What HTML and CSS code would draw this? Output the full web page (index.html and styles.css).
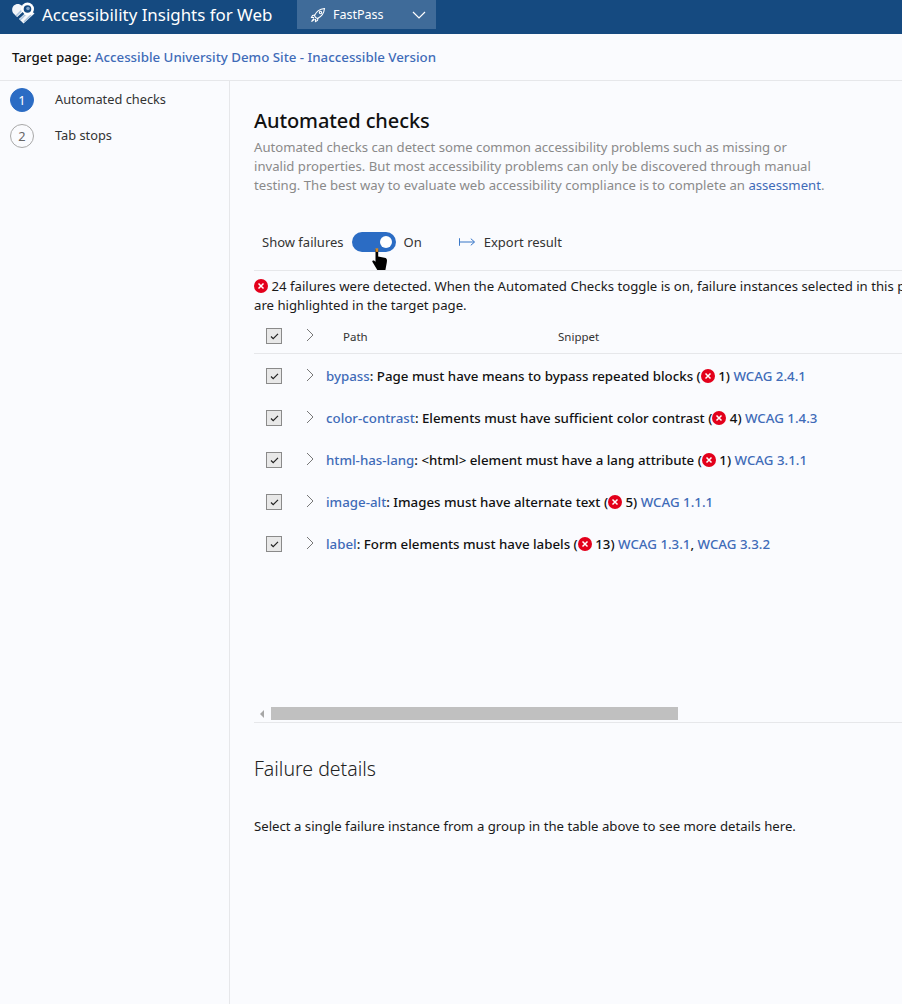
FILE: index.html
```html
<!DOCTYPE html>
<html lang="en">
<head>
<meta charset="utf-8">
<title>Accessibility Insights for Web</title>
<link rel="stylesheet" href="styles.css">
</head>
<body>
<header class="topbar">
  <svg class="logo" viewBox="0 0 24 22" width="24" height="22" aria-hidden="true">
    <path fill="#f2f5f9" d="M11.500 21.500 1.800 11.800C-.4 9.500-.4 5.800 1.800 3.600 4 1.400 7.600 1.400 9.800 3.600L11.500 5.300 13 3.800 22.500 11.500Z"/>
    <path stroke="#a9c3de" stroke-width="1.500" d="M4 14 11 7M8 18 15 11M12 20 19 13"/>
    <circle cx="15.500" cy="7" r="6.500" fill="#fff"/>
    <circle cx="15.500" cy="7" r="3.800" fill="#154a80"/>
    <circle cx="16" cy="6.500" r="1.800" fill="#7fa3c9"/>
    <path d="M11.500 11 5.500 16.500" stroke="#154a80" stroke-width="2.400"/>
  </svg>
  <div class="brand">Accessibility Insights for Web</div>
  <div class="switcher">
    <svg class="rocket" viewBox="0 0 16 16" width="16" height="16" aria-hidden="true" fill="none" stroke="#fff" stroke-width="1.100">
      <path d="M5.500 10.500 4.500 8.500C6.500 4 10 2 14.500 1.500 14 6 12 9.500 7.500 11.500Z"/>
      <path d="M5 8 2.500 8.500 1.500 10.500 4 10.500M8 11 7.500 13.500 5.500 14.500 5.500 12M3.800 11.500 1.500 14.500 4.500 12.300"/>
      <circle cx="10.500" cy="5.500" r="1.200"/>
    </svg>
    <span class="switcher-label">FastPass</span>
    <svg class="switcher-chevron" viewBox="0 0 14 8" width="14" height="8" aria-hidden="true" fill="none" stroke="#fff" stroke-width="1.200"><path d="M1 1 7 7 13 1"/></svg>
  </div>
</header>
<div class="target-bar"><span class="target-label">Target page:</span> <a class="link target-link">Accessible University Demo Site - Inaccessible Version</a></div>
<div class="layout">
  <nav class="sidebar">
    <div class="step"><span class="badge badge-active">1</span><span class="step-label">Automated checks</span></div>
    <div class="step"><span class="badge">2</span><span class="step-label">Tab stops</span></div>
  </nav>
  <main class="content">
    <h1 class="title">Automated checks</h1>
    <p class="intro">Automated checks can detect some common accessibility problems such as missing or invalid properties. But most accessibility problems can only be discovered through manual testing. The best way to evaluate web accessibility compliance is to complete an <a class="link plain">assessment</a>.</p>
    <div class="command-bar">
      <span>Show failures</span>
      <span class="toggle"><span class="knob"></span>
        <svg class="cursor" viewBox="0 0 20 26" width="18" height="24" aria-hidden="true">
          <path fill="#000" d="M5 1.500C5 .5 8 .5 8 1.500V9L15 10.500C18 11 18 13 17.500 16L16 24H7L1.500 15C1 13.500 3 13 4 14L5 15Z"/>
          <rect x="5" y="0" width="3" height="4" fill="#d98a1f"/>
        </svg>
      </span>
      <span class="toggle-state">On</span>
      <span class="export">
        <svg viewBox="0 0 18 10" width="17" height="10" aria-hidden="true" fill="none" stroke="#2b6cc4" stroke-width="1"><path d="M.5 1V9M1 5H16M12.500 1.500 16.500 5 12.500 8.500"/></svg>
        Export result
      </span>
    </div>
    <div class="summary"><svg class="x-icon" viewBox="0 0 14 14" aria-hidden="true"><circle cx="7" cy="7" r="7" fill="#e3001b"/><path d="M4.500 4.500 9.500 9.500M9.500 4.500 4.500 9.500" stroke="#fff" stroke-width="1.500"/></svg> 24 failures were detected. When the Automated Checks toggle is on, failure instances selected in this page are highlighted in the target page.</div>
    <div class="table">
      <div class="row head">
        <span class="check"><svg viewBox="0 0 10 8" width="9" height="7"><path d="M1 4 3.500 6.500 9 1" fill="none" stroke="#222" stroke-width="1.400"/></svg></span>
        <svg class="chev" viewBox="0 0 8 14" width="8" height="14"><path d="M1 1 7 7 1 13" fill="none" stroke="#777" stroke-width="1"/></svg>
        <span class="col-path">Path</span><span>Snippet</span>
      </div>
      <div class="groups">
        <div class="row group">
          <span class="check"><svg viewBox="0 0 10 8" width="9" height="7"><path d="M1 4 3.500 6.500 9 1" fill="none" stroke="#222" stroke-width="1.400"/></svg></span>
          <svg class="chev" viewBox="0 0 8 14" width="8" height="14"><path d="M1 1 7 7 1 13" fill="none" stroke="#777" stroke-width="1"/></svg>
          <span class="rule"><a class="link">bypass</a>: Page must have means to bypass repeated blocks (<svg class="x-icon" viewBox="0 0 14 14"><circle cx="7" cy="7" r="7" fill="#e3001b"/><path d="M4.500 4.500 9.500 9.500M9.500 4.500 4.500 9.500" stroke="#fff" stroke-width="1.500"/></svg> 1) <a class="link">WCAG 2.4.1</a></span>
        </div>
        <div class="row group">
          <span class="check"><svg viewBox="0 0 10 8" width="9" height="7"><path d="M1 4 3.500 6.500 9 1" fill="none" stroke="#222" stroke-width="1.400"/></svg></span>
          <svg class="chev" viewBox="0 0 8 14" width="8" height="14"><path d="M1 1 7 7 1 13" fill="none" stroke="#777" stroke-width="1"/></svg>
          <span class="rule"><a class="link">color-contrast</a>: Elements must have sufficient color contrast (<svg class="x-icon" viewBox="0 0 14 14"><circle cx="7" cy="7" r="7" fill="#e3001b"/><path d="M4.500 4.500 9.500 9.500M9.500 4.500 4.500 9.500" stroke="#fff" stroke-width="1.500"/></svg> 4) <a class="link">WCAG 1.4.3</a></span>
        </div>
        <div class="row group">
          <span class="check"><svg viewBox="0 0 10 8" width="9" height="7"><path d="M1 4 3.500 6.500 9 1" fill="none" stroke="#222" stroke-width="1.400"/></svg></span>
          <svg class="chev" viewBox="0 0 8 14" width="8" height="14"><path d="M1 1 7 7 1 13" fill="none" stroke="#777" stroke-width="1"/></svg>
          <span class="rule"><a class="link">html-has-lang</a>: &lt;html&gt; element must have a lang attribute (<svg class="x-icon" viewBox="0 0 14 14"><circle cx="7" cy="7" r="7" fill="#e3001b"/><path d="M4.500 4.500 9.500 9.500M9.500 4.500 4.500 9.500" stroke="#fff" stroke-width="1.500"/></svg> 1) <a class="link">WCAG 3.1.1</a></span>
        </div>
        <div class="row group">
          <span class="check"><svg viewBox="0 0 10 8" width="9" height="7"><path d="M1 4 3.500 6.500 9 1" fill="none" stroke="#222" stroke-width="1.400"/></svg></span>
          <svg class="chev" viewBox="0 0 8 14" width="8" height="14"><path d="M1 1 7 7 1 13" fill="none" stroke="#777" stroke-width="1"/></svg>
          <span class="rule"><a class="link">image-alt</a>: Images must have alternate text (<svg class="x-icon" viewBox="0 0 14 14"><circle cx="7" cy="7" r="7" fill="#e3001b"/><path d="M4.500 4.500 9.500 9.500M9.500 4.500 4.500 9.500" stroke="#fff" stroke-width="1.500"/></svg> 5) <a class="link">WCAG 1.1.1</a></span>
        </div>
        <div class="row group">
          <span class="check"><svg viewBox="0 0 10 8" width="9" height="7"><path d="M1 4 3.500 6.500 9 1" fill="none" stroke="#222" stroke-width="1.400"/></svg></span>
          <svg class="chev" viewBox="0 0 8 14" width="8" height="14"><path d="M1 1 7 7 1 13" fill="none" stroke="#777" stroke-width="1"/></svg>
          <span class="rule"><a class="link">label</a>: Form elements must have labels (<svg class="x-icon" viewBox="0 0 14 14"><circle cx="7" cy="7" r="7" fill="#e3001b"/><path d="M4.500 4.500 9.500 9.500M9.500 4.500 4.500 9.500" stroke="#fff" stroke-width="1.500"/></svg> 13) <a class="link">WCAG 1.3.1</a>, <a class="link">WCAG 3.3.2</a></span>
        </div>
      </div>
      <div class="scrollbar">
        <span class="scroll-arrow"></span>
        <span class="scroll-thumb"></span>
      </div>
    </div>
    <h2 class="details-title">Failure details</h2>
    <p class="details-text">Select a single failure instance from a group in the table above to see more details here.</p>
  </main>
</div>
</body>
</html>
```
FILE: styles.css
```css
* { box-sizing: border-box; }
html, body { margin: 0; height: 100%; overflow: hidden; }
body {
  width: 902px;
  height: 1004px;
  background: #fafbfe;
  color: #1a1a1a;
  font-family: "Noto Sans", "Open Sans", sans-serif;
  font-size: 13px;
  display: flex;
  flex-direction: column;
}
.topbar {
  height: 34px;
  flex: none;
  background: #154a80;
  display: flex;
  align-items: center;
  padding-left: 12px;
  color: #fff;
}
.logo { margin-right: 6px; margin-top: -9px; flex: none; }
.brand { font-size: 16.900px; width: 255px; white-space: nowrap; margin-top: -5px; }
.switcher {
  width: 139px;
  height: 29px;
  align-self: flex-start;
  background: #3f6b99;
  display: flex;
  align-items: center;
  padding-left: 13px;
}
.rocket { margin-right: 7px; }
.switcher-label { font-size: 12.500px; width: 79px; }
.target-bar {
  height: 47px;
  flex: none;
  border-bottom: 1px solid #e6e7ea;
  padding: 14px 0 0 12px;
  font-size: 13.300px;
  font-weight: 500;
  white-space: nowrap;
}
.target-label { color: #111; }
.link { color: #3f6bb8; }
.plain { font-weight: 400; }
.layout { flex: 1; display: flex; min-height: 0; }
.sidebar {
  width: 230px;
  flex: none;
  border-right: 1px solid #e6e7ea;
  padding-top: 7px;
}
.step {
  display: flex;
  align-items: flex-start;
  height: 36px;
  padding-left: 10px;
  gap: 21px;
  color: #333;
  font-size: 12.800px;
}
.step-label { margin-top: 2px; }
.badge {
  width: 24px;
  height: 24px;
  flex: none;
  border-radius: 50%;
  border: 1px solid #a8a8a8;
  color: #666;
  display: flex;
  align-items: center;
  justify-content: center;
}
.badge-active { background: #2b6cc4; border-color: #2b6cc4; color: #fff; }
.content { flex: 1; min-width: 0; padding: 26px 0 0 24px; overflow: hidden; }
.title { margin: 0; font-size: 20px; font-weight: 500; line-height: 28px; color: #111; letter-spacing: -0.100px; white-space: nowrap; }
.intro { margin: 3px 0 0; width: 576px; font-size: 13.150px; line-height: 19px; color: #8a8a8a; }
.command-bar {
  display: flex;
  align-items: center;
  height: 56px;
  margin-top: 20px;
  padding: 0 0 1px 8px;
  border-bottom: 1px solid #e6e7ea;
  color: #333;
  font-size: 13px;
  margin-right: -1px;
}
.toggle {
  position: relative;
  width: 44px;
  height: 20px;
  border-radius: 10px;
  background: #2b6cc4;
  margin-left: 8px;
}
.knob { position: absolute; right: 4px; top: 4px; width: 12px; height: 12px; border-radius: 50%; background: #fff; }
.cursor { position: absolute; left: 19px; top: 16px; }
.toggle-state { margin-left: 8px; }
.export { margin-left: 37px; display: flex; align-items: center; gap: 8px; }
.summary { margin-top: 6px; width: 690px; font-size: 13.200px; line-height: 19px; color: #1a1a1a; }
.x-icon { width: 14px; height: 14px; vertical-align: -2px; }
.table { margin-top: 4px; }
.row { display: flex; align-items: center; white-space: nowrap; }
.head { height: 35px; border-bottom: 1px solid #e6e7ea; font-size: 11.500px; color: #333; }
.check {
  width: 16px;
  height: 16px;
  flex: none;
  margin-left: 12px;
  background: #e8e8e8;
  border: 1px solid #8a8a8a;
  display: flex;
  align-items: center;
  justify-content: center;
}
.chev { margin-left: 24px; margin-top: -3px; flex: none; }
.col-path { margin-left: 29px; width: 215px; }
.groups { height: 353px; padding-top: 1px; }
.group { height: 42px; font-weight: 500; font-size: 13.300px; color: #111; }
.rule { margin-left: 12px; }
.scrollbar { display: flex; align-items: flex-start; height: 16px; border-bottom: 1px solid #e6e7ea; padding-left: 6px; margin-right: -1px; }
.scroll-arrow { width: 0; height: 0; margin-top: 3px; border: 4px solid transparent; border-right-color: #a6a6a6; border-left-width: 0; }
.scroll-thumb { width: 407px; height: 13px; background: #c0c0c0; margin-left: 7px; }
.details-title { margin: 32px 0 0; padding: 0; font-size: 19.500px; font-weight: 300; line-height: 28px; color: #222; }
.details-text { margin: 34px 0 0; font-size: 13.200px; color: #1a1a1a; }
```
